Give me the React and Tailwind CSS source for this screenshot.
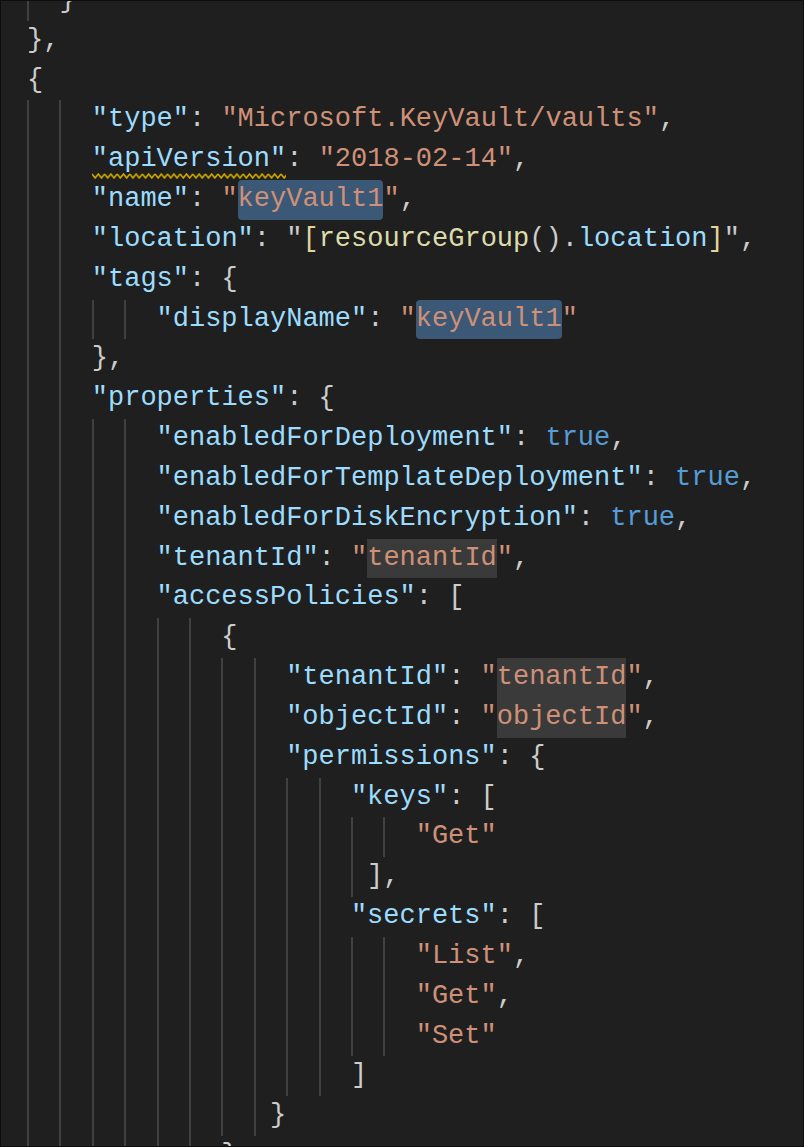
import React from 'react';

const P = 'text-[#cccccc]';
const K = 'text-[#9cdcfe]';
const S = 'text-[#ce9178]';
const B = 'text-[#569cd6]';
const F = 'text-[#dcdcaa]';
const Y = 'text-[#e2d39a]';

// c = indent column (chars), t = tokens [text, colour, mark]
const lines = [
  { c: 4, t: [['}', P]] },
  { c: 2, t: [['},', P]] },
  { c: 2, t: [['{', P]] },
  { c: 6, t: [['"type"', K], [': ', P], ['"Microsoft.KeyVault/vaults"', S], [',', P]] },
  { c: 6, t: [['"apiVersion"', K, 'warn'], [': ', P], ['"2018-02-14"', S], [',', P]] },
  { c: 6, t: [['"name"', K], [': ', P], ['"', S], ['keyVault1', S, 'sel'], ['"', S], [',', P]] },
  {
    c: 6,
    t: [
      ['"location"', K], [': ', P], ['"', P], ['[', Y], ['resourceGroup', F], ['()', P],
      ['.', P], ['location', K], [']', Y], ['"', P], [',', P],
    ],
  },
  { c: 6, t: [['"tags"', K], [': {', P]] },
  { c: 10, t: [['"displayName"', K], [': ', P], ['"', S], ['keyVault1', S, 'sel'], ['"', S]] },
  { c: 6, t: [['},', P]] },
  { c: 6, t: [['"properties"', K], [': {', P]] },
  { c: 10, t: [['"enabledForDeployment"', K], [': ', P], ['true', B], [',', P]] },
  { c: 10, t: [['"enabledForTemplateDeployment"', K], [': ', P], ['true', B], [',', P]] },
  { c: 10, t: [['"enabledForDiskEncryption"', K], [': ', P], ['true', B], [',', P]] },
  { c: 10, t: [['"tenantId"', K], [': ', P], ['"', S], ['tenantId', S, 'word'], ['"', S], [',', P]] },
  { c: 10, t: [['"accessPolicies"', K], [': [', P]] },
  { c: 14, t: [['{', P]] },
  { c: 18, t: [['"tenantId"', K], [': ', P], ['"', S], ['tenantId', S, 'word'], ['"', S], [',', P]] },
  { c: 18, t: [['"objectId"', K], [': ', P], ['"', S], ['objectId', S, 'word'], ['"', S], [',', P]] },
  { c: 18, t: [['"permissions"', K], [': {', P]] },
  { c: 22, t: [['"keys"', K], [': [', P]] },
  { c: 26, t: [['"Get"', S]] },
  { c: 23, t: [['],', P]] },
  { c: 22, t: [['"secrets"', K], [': [', P]] },
  { c: 26, t: [['"List"', S], [',', P]] },
  { c: 26, t: [['"Get"', S], [',', P]] },
  { c: 26, t: [['"Set"', S]] },
  { c: 22, t: [[']', P]] },
  { c: 17, t: [['}', P]] },
  { c: 14, t: [['}', P]] },
];

function Squiggle() {
  return (
    <svg className="absolute left-0 bottom-[1px] w-full h-[6px]" preserveAspectRatio="none">
      <defs>
        <pattern id="sq" width="12.6" height="6" patternUnits="userSpaceOnUse">
          <polyline points="0,1 3.15,5 6.3,1 9.45,5 12.6,1" fill="none" stroke="#cca700" strokeWidth="1.6" />
        </pattern>
      </defs>
      <rect width="100%" height="6" fill="url(#sq)" />
    </svg>
  );
}

function Token({ text, cls, mark }) {
  if (mark === 'sel') {
    return <span className={`${cls} inline-block bg-[#3b5876] rounded-[4px]`}>{text}</span>;
  }
  if (mark === 'word') {
    return <span className={`${cls} inline-block bg-[#3a3a3a]`}>{text}</span>;
  }
  if (mark === 'warn') {
    return (
      <span className={`${cls} relative inline-block`}>
        {text}
        <Squiggle />
      </span>
    );
  }
  return <span className={cls}>{text}</span>;
}

function Line({ c, t }) {
  const guides = [];
  for (let k = 0; k < c; k += 2) guides.push(k);
  return (
    <div className="flex h-[39.83px] items-center">
      {guides.map((k) => (
        <span
          key={k}
          className={
            (c - k >= 2 ? 'w-[2ch]' : 'w-[1ch]') +
            ' shrink-0 self-stretch border-l-2 border-[#404040]'
          }
        />
      ))}
      <span className="whitespace-pre">
        {t.map(([text, cls, mark], i) => (
          <Token key={i} text={text} cls={cls} mark={mark} />
        ))}
      </span>
    </div>
  );
}

export default function App() {
  return (
    <div className="w-[804px] h-[1147px] overflow-hidden border border-[#0d0d0d] bg-[#1f1f1f]">
      <div className="mt-[-20px] ml-[-6.4px] font-['Liberation_Mono','DejaVu_Sans_Mono',monospace] text-[27px] leading-[39.83px]">
        {lines.map((l, i) => (
          <Line key={i} c={l.c} t={l.t} />
        ))}
      </div>
    </div>
  );
}
